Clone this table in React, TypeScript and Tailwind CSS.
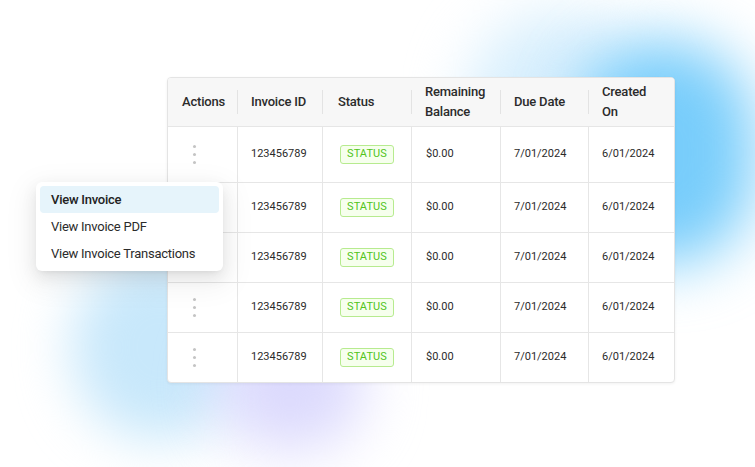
import React from 'react';

const ROWS = [56, 50, 50, 50, 49];

const HEADERS = ['Actions', 'Invoice ID', 'Status', 'Remaining Balance', 'Due Date', 'Created On'];

const COLS = 'grid grid-cols-[69px_85px_89px_89px_88px_87px]';

function Dots() {
  return (
    <div className="flex flex-col items-center gap-[5px] w-[3px] ml-[11px]">
      <span className="block w-[3px] h-[3px] rounded-full bg-[#c4c4c4]" />
      <span className="block w-[3px] h-[3px] rounded-full bg-[#c4c4c4]" />
      <span className="block w-[3px] h-[3px] rounded-full bg-[#c4c4c4]" />
    </div>
  );
}

function StatusBadge() {
  return (
    <span className="inline-flex items-center h-[19px] px-[6px] rounded-[3px] border border-[#b7eb8f] bg-[#f6ffed] text-[#52c41a] text-[11px] tracking-[0.1px]">
      STATUS
    </span>
  );
}

export default function App() {
  return (
    <div className="relative w-[755px] h-[467px] overflow-hidden bg-white font-['Roboto',sans-serif]">
      {/* background blobs */}
      <div className="absolute left-[465px] top-[12px] w-[190px] h-[210px] rounded-full bg-[#d8effd] blur-[28px]" />
      <div className="absolute left-[575px] top-[40px] w-[180px] h-[225px] rounded-full bg-[#78cdfb] blur-[30px]" />
      <div className="absolute left-[72px] top-[255px] w-[175px] h-[185px] rounded-full bg-[#c8e8fb] blur-[26px]" />
      <div className="absolute left-[215px] top-[320px] w-[150px] h-[130px] rounded-full bg-[#dcdafd] blur-[28px]" />

      <div className="relative pl-[167px] pt-[77px]">
        <div className="w-[508px] bg-white border border-[#e4e4e4] rounded-[4px] overflow-hidden shadow-[0_1px_3px_rgba(0,0,0,0.06)] text-[#2b2b2b]">
          <div className={`${COLS} h-[49px] bg-[#f7f7f7] border-b border-[#e6e6e6]`}>
            {HEADERS.map((h, i) => (
              <div key={h} className="flex items-center h-full min-w-0">
                {i > 0 && <span className="block shrink-0 w-px h-[24px] bg-[#e3e3e3]" />}
                <span
                  className={`${i === 2 ? 'pl-[15px]' : i === 0 ? 'pl-[14px]' : 'pl-[13px]'} pr-[13px] flex-1 text-[13px] tracking-[-0.2px] font-medium leading-[20px]`}
                >
                  {h}
                </span>
              </div>
            ))}
          </div>
          {ROWS.map((rh, r) => (
            <div
              key={r}
              className={`${COLS} ${r < ROWS.length - 1 ? 'border-b border-[#e6e6e6]' : ''} text-[11px]`}
              style={{ height: rh }}
            >
              <div className="flex items-center pl-[14px]">
                <Dots />
              </div>
              <div className="flex items-center pl-[13px] border-l border-[#e6e6e6]">123456789</div>
              <div className="flex items-center pl-[17px] border-l border-[#e6e6e6]">
                <StatusBadge />
              </div>
              <div className="flex items-center pl-[14px] border-l border-[#e6e6e6]">$0.00</div>
              <div className="flex items-center pl-[13px] border-l border-[#e6e6e6]">7/01/2024</div>
              <div className="flex items-center pl-[13px] border-l border-[#e6e6e6]">6/01/2024</div>
            </div>
          ))}
        </div>
      </div>

      {/* dropdown menu */}
      <div className="absolute left-[36px] top-[182px] w-[187px] p-[4px] bg-white rounded-[6px] shadow-[0_6px_16px_0_rgba(0,0,0,0.08),0_3px_6px_-4px_rgba(0,0,0,0.12),0_9px_28px_8px_rgba(0,0,0,0.05)] text-[13px] tracking-[-0.25px] text-[#2b2b2b] whitespace-nowrap">
        <div className="flex items-center h-[27px] px-[11px] rounded-[4px] bg-[#e6f4fb] font-medium text-[#222]">View Invoice</div>
        <div className="flex items-center h-[27px] px-[11px]">View Invoice PDF</div>
        <div className="flex items-center h-[27px] px-[11px]">View Invoice Transactions</div>
      </div>
    </div>
  );
}
